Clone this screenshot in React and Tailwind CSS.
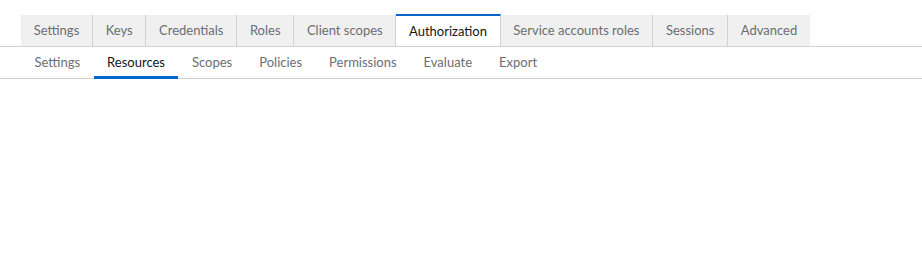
const mainTabs = [
  'Settings',
  'Keys',
  'Credentials',
  'Roles',
  'Client scopes',
  'Authorization',
  'Service accounts roles',
  'Sessions',
  'Advanced',
];

const subTabs = ['Settings', 'Resources', 'Scopes', 'Policies', 'Permissions', 'Evaluate', 'Export'];

const font = { fontFamily: 'Lato, "Liberation Sans", sans-serif' };

const App = () => {
  const activeMain = 'Authorization';
  const activeSub = 'Resources';

  return (
    <div className="min-h-[254px] w-full bg-white text-[13px]" style={font}>
      {/* Client tabs */}
      <div className="flex items-end border-b border-[#d2d2d2] pl-[21px] pt-[14px]">
        {mainTabs.map((tab, index) => {
          const isActive = tab === activeMain;
          const isLast = index === mainTabs.length - 1;
          return (
            <button
              key={tab}
              className={`flex items-center px-[12.7px] leading-none ${
                isActive
                  ? 'h-[32px] border-t-2 border-[#0066cc] bg-white text-[#151515]'
                  : 'h-[31px] bg-[#f0f0f0] text-[#6a6e73]'
              } ${isLast ? '' : 'border-r border-r-[#d2d2d2]'}`}
            >
              {tab}
            </button>
          );
        })}
      </div>

      {/* Authorization sub tabs */}
      <div className="flex border-b border-[#d2d2d2] pl-[21px]">
        {subTabs.map((tab) => {
          const isActive = tab === activeSub;
          return (
            <button
              key={tab}
              className={`relative flex h-[31px] items-center px-[13.5px] leading-none ${
                isActive ? 'text-[#151515]' : 'text-[#6a6e73]'
              }`}
            >
              {tab}
              {isActive && (
                <span className="absolute -bottom-px left-0 right-0 h-[3px] bg-[#0066cc]" />
              )}
            </button>
          );
        })}
      </div>
    </div>
  );
};

export default App;
